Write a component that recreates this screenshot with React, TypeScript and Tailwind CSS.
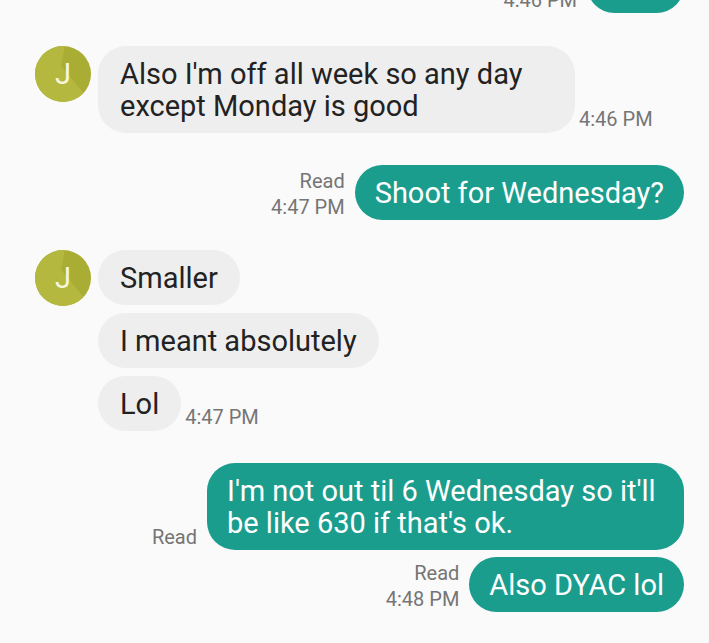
import React from "react";

type Received = { kind: "in"; bubbles: string[]; time: string };
type Sent = { kind: "out"; text: string; read?: boolean; time?: string };

const font = { fontFamily: "Roboto, 'Noto Sans', sans-serif" };

const Avatar = () => (
    <div className="relative w-[56px] h-[56px] shrink-0">
        <svg width="56" height="56" viewBox="0 0 56 56" className="absolute inset-0">
            <defs>
                <clipPath id="av">
                    <circle cx="28" cy="28" r="28" />
                </clipPath>
            </defs>
            <g clipPath="url(#av)">
                <rect width="56" height="56" fill="#a9ad34" />
                <polygon points="0,0 30,0 26,20 56,56 0,56" fill="#b4b83f" />
            </g>
        </svg>
        <span className="absolute inset-0 flex items-center justify-center text-[29px] text-[#f6f6de] leading-none">
            J
        </span>
    </div>
);

const MetaText = ({ children }: { children: React.ReactNode }) => (
    <span className="text-[20px] leading-[26px] text-[#757575]">{children}</span>
);

const ReceivedGroup = ({ msg }: { msg: Received }) => (
    <div className="flex items-start gap-[7px] pl-[35px]">
        <Avatar />
        <div className="flex flex-col gap-[8px]">
            {msg.bubbles.map((b, i) => (
                <div key={i} className="flex items-end gap-[4px]">
                    <div className="bg-[#eeeeee] text-[#222222] rounded-[28px] px-[22px] py-[11.5px] text-[29px] leading-[32px] max-w-[477px]">
                        {b}
                    </div>
                    {i === msg.bubbles.length - 1 && (
                        <div className="pb-[0px] whitespace-nowrap">
                            <MetaText>{msg.time}</MetaText>
                        </div>
                    )}
                </div>
            ))}
        </div>
    </div>
);

const SentRow = ({ msg }: { msg: Sent }) => (
    <div className="flex items-end justify-end gap-[10px] pr-[25px]">
        <div className="flex flex-col items-end">
            {msg.read && <MetaText>Read</MetaText>}
            {msg.time && <MetaText>{msg.time}</MetaText>}
        </div>
        <div className="bg-[#1b9d8e] text-white rounded-[28px] px-[20px] py-[11.5px] text-[29px] leading-[32px] max-w-[477px] min-w-[97px] min-h-[55px]">
            {msg.text}
        </div>
    </div>
);

export default function App() {
    return (
        <div className="w-[709px] h-[643px] overflow-hidden bg-[#fafafa]" style={font}>
            <div className="flex flex-col -mt-[42px]">
                <SentRow msg={{ kind: "out", text: "", time: "4:46 PM" }} />
                <div className="h-[33px]" />
                <ReceivedGroup
                    msg={{
                        kind: "in",
                        bubbles: ["Also I'm off all week so any day except Monday is good"],
                        time: "4:46 PM",
                    }}
                />
                <div className="h-[32px]" />
                <SentRow msg={{ kind: "out", text: "Shoot for Wednesday?", read: true, time: "4:47 PM" }} />
                <div className="h-[30px]" />
                <ReceivedGroup
                    msg={{ kind: "in", bubbles: ["Smaller", "I meant absolutely", "Lol"], time: "4:47 PM" }}
                />
                <div className="h-[32px]" />
                <SentRow
                    msg={{
                        kind: "out",
                        text: "I'm not out til 6 Wednesday so it'll be like 630 if that's ok.",
                        read: true,
                    }}
                />
                <div className="h-[7px]" />
                <SentRow msg={{ kind: "out", text: "Also DYAC lol", read: true, time: "4:48 PM" }} />
            </div>
        </div>
    );
}
